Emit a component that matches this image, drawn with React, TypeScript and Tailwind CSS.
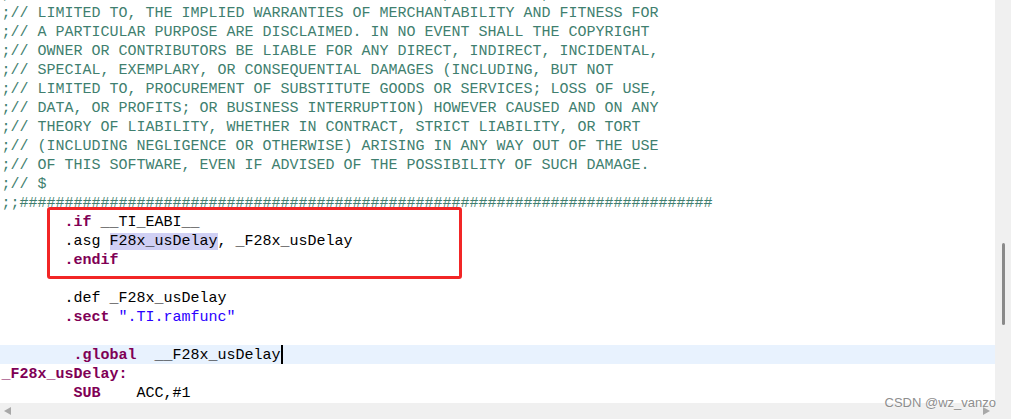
import React from 'react';

type Tok = { t: string; k?: 'kw' | 'str' | 'occ' };

const MONO = '"Liberation Mono", "DejaVu Sans Mono", monospace';

const commentLines = [
  ';// "AS IS" AND ANY EXPRESS OR IMPLIED WARRANTIES, INCLUDING, BUT NOT',
  ';// LIMITED TO, THE IMPLIED WARRANTIES OF MERCHANTABILITY AND FITNESS FOR',
  ';// A PARTICULAR PURPOSE ARE DISCLAIMED. IN NO EVENT SHALL THE COPYRIGHT',
  ';// OWNER OR CONTRIBUTORS BE LIABLE FOR ANY DIRECT, INDIRECT, INCIDENTAL,',
  ';// SPECIAL, EXEMPLARY, OR CONSEQUENTIAL DAMAGES (INCLUDING, BUT NOT',
  ';// LIMITED TO, PROCUREMENT OF SUBSTITUTE GOODS OR SERVICES; LOSS OF USE,',
  ';// DATA, OR PROFITS; OR BUSINESS INTERRUPTION) HOWEVER CAUSED AND ON ANY',
  ';// THEORY OF LIABILITY, WHETHER IN CONTRACT, STRICT LIABILITY, OR TORT',
  ';// (INCLUDING NEGLIGENCE OR OTHERWISE) ARISING IN ANY WAY OUT OF THE USE',
  ';// OF THIS SOFTWARE, EVEN IF ADVISED OF THE POSSIBILITY OF SUCH DAMAGE.',
  ';// $',
  ';;' + '#'.repeat(77),
];

const codeLines: Tok[][] = [
  [{ t: '       ' }, { t: '.if', k: 'kw' }, { t: ' __TI_EABI__' }],
  [{ t: '       .asg ' }, { t: 'F28x_usDelay', k: 'occ' }, { t: ', _F28x_usDelay' }],
  [{ t: '       ' }, { t: '.endif', k: 'kw' }],
  [],
  [{ t: '       .def _F28x_usDelay' }],
  [{ t: '       ' }, { t: '.sect', k: 'kw' }, { t: ' ' }, { t: '".TI.ramfunc"', k: 'str' }],
  [],
  [{ t: '        ' }, { t: '.global', k: 'kw' }, { t: '  __F28x_usDelay' }],
  [{ t: '_F28x_usDelay:', k: 'kw' }],
  [{ t: '        ' }, { t: 'SUB', k: 'kw' }, { t: '    ACC,#1' }],
];

function Token({ tok }: { tok: Tok }) {
  if (tok.k === 'kw') return <span className="font-bold text-[#7f0055]">{tok.t}</span>;
  if (tok.k === 'str') return <span className="text-[#2a00ff]">{tok.t}</span>;
  if (tok.k === 'occ') return <span className="bg-[#d0d0f4] text-black">{tok.t}</span>;
  return <span className="text-black">{tok.t}</span>;
}

export default function App() {
  return (
    <div className="relative flex w-[1011px] h-[419px] bg-white overflow-hidden">
      {/* editor column */}
      <div className="flex flex-col flex-1 min-w-0">
        <div className="relative flex-1 overflow-hidden">
          <div className="mt-[-16px] pl-[1.5px] text-[15px]" style={{ fontFamily: MONO }}>
            {commentLines.map((l, i) => (
              <div key={i} className="h-[19px] pt-[2px] leading-[17px] whitespace-pre text-[#3f7f6f]">
                {l}
              </div>
            ))}
            {codeLines.map((toks, i) => {
              const current = i === 7;
              return (
                <div
                  key={'c' + i}
                  className={`relative h-[19px] pt-[2px] leading-[17px] whitespace-pre -ml-[1.5px] pl-[1.5px] ${
                    current ? 'bg-[#e8f2fe]' : ''
                  }`}
                >
                  {toks.map((tok, j) => (
                    <Token key={j} tok={tok} />
                  ))}
                  {current && <div className="absolute left-[281px] top-0 h-[19px] w-[2px] bg-black" />}
                </div>
              );
            })}
          </div>

          {/* red annotation box */}
          <div className="absolute left-[47px] top-[207px] w-[415px] h-[72px] border-[3px] border-[#f22626] rounded-[3px]" />
        </div>

        {/* horizontal scrollbar */}
        <div className="flex items-center justify-between h-[16px] bg-[#f0f0f0] pl-[4px] pr-[5px]">
          <svg width="7" height="8" viewBox="0 0 7 8">
            <path d="M7 0 L0 4 L7 8 Z" fill="#a8a8a8" />
          </svg>
          <svg width="7" height="8" viewBox="0 0 7 8">
            <path d="M0 0 L7 4 L0 8 Z" fill="#a8a8a8" />
          </svg>
        </div>
      </div>

      {/* vertical scrollbar */}
      <div className="w-[16px] bg-[#f0f0f0] pt-[243px]">
        <div className="ml-[7px] w-[3px] h-[82px] rounded-full bg-[#8a8a8a]" />
      </div>

      {/* watermark */}
      <div
        className="absolute right-[15px] top-[395px] text-[13px] leading-[16px] text-[#8e8e8e]"
        style={{ fontFamily: '"Liberation Sans", Arial, sans-serif', textShadow: '0 0 2px #ffffff' }}
      >
        CSDN @wz_vanzo
      </div>
    </div>
  );
}
